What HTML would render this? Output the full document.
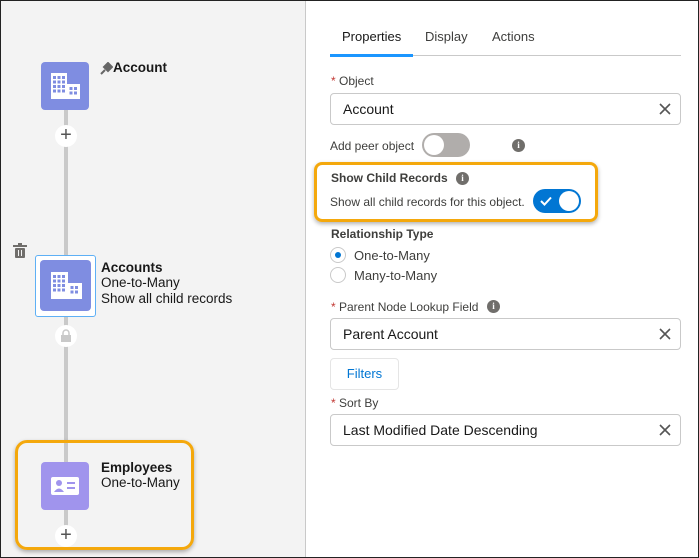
<!DOCTYPE html>
<html><head><style>
*{box-sizing:border-box;margin:0;padding:0}
body{width:699px;height:558px;position:relative;font-family:"Liberation Sans",sans-serif;background:#fff;overflow:hidden}
.frame{position:absolute;left:0;top:0;width:699px;height:558px;border:1px solid #222;pointer-events:none;z-index:10}
.left{position:absolute;left:0;top:0;width:306px;height:558px;background:#f3f3f3;border-right:1px solid #c9c9c9}
.abs{position:absolute}
.line{position:absolute;left:64px;width:4px;background:#c9c9c9}
.circ{position:absolute;width:22px;height:22px;border-radius:50%;background:#fff;color:#555;font-size:20px;line-height:21px;text-align:center}
.t{position:absolute;font-size:13.5px;color:#181818;line-height:16px;white-space:nowrap}
.b{font-weight:bold}
.lbl{position:absolute;font-size:12px;color:#3e3e3c;white-space:nowrap}
.req{color:#c23934}
.inp{position:absolute;left:330px;width:351px;height:32px;border:1px solid #c9c9c9;border-radius:4px;font-size:14px;color:#181818;padding-left:12px;line-height:30px}
.x{position:absolute;right:9px;top:9px}
.info{position:absolute;width:13px;height:13px;border-radius:50%;background:#706e6b;color:#fff;font-size:9px;font-weight:bold;text-align:center;line-height:13px;font-family:"Liberation Serif",serif}
</style></head><body>
<div class="left"></div>
<div class="line" style="top:110px;height:150px"></div>
<div class="line" style="top:316px;height:150px"></div>
<div class="line" style="top:510px;height:20px"></div>

<svg class="abs" style="left:41px;top:62px" width="48" height="48"><rect width="48" height="48" rx="4" fill="#7f8de1"/><g fill="#fff"><rect x="10" y="11" width="16" height="26"/><rect x="26" y="22" width="13" height="15"/></g><g fill="#7f8de1"><rect x="12" y="14" width="3" height="3"/><rect x="16.5" y="14" width="3" height="3"/><rect x="21" y="14" width="3" height="3"/><rect x="12" y="18.5" width="3" height="3"/><rect x="16.5" y="18.5" width="3" height="3"/><rect x="21" y="18.5" width="3" height="3"/><rect x="12" y="23" width="3" height="3"/><rect x="16.5" y="23" width="3" height="3"/><rect x="21" y="23" width="3" height="3"/><rect x="12" y="27.5" width="3" height="3"/><rect x="16.5" y="27.5" width="3" height="3"/><rect x="21" y="27.5" width="3" height="3"/><rect x="28.5" y="25" width="3" height="3"/><rect x="33" y="25" width="3" height="3"/><rect x="28.5" y="29.5" width="3" height="3"/><rect x="33" y="29.5" width="3" height="3"/></g></svg>
<div class="circ" style="left:55px;top:125px">+</div>
<svg class="abs" style="left:100px;top:62px" width="13" height="13"><path d="M1 12 L5 8 M4 5 L8 9 L12 5 L8 1 Z" stroke="#666" stroke-width="2" fill="#666"/></svg>
<div class="t b" style="left:113px;top:60px">Account</div>

<svg class="abs" style="left:13px;top:243px" width="14" height="15"><rect x="0" y="2" width="14" height="2" fill="#706e6b"/><rect x="5" y="0" width="4" height="2" fill="#706e6b"/><rect x="2" y="5" width="10" height="10" rx="1" fill="#706e6b"/><rect x="5" y="7" width="1" height="6" fill="#f3f3f3"/><rect x="8" y="7" width="1" height="6" fill="#f3f3f3"/></svg>
<div class="abs" style="left:35px;top:255px;width:61px;height:62px;border:1px solid #5eb0f5;border-radius:3px;background:#fff"></div>
<svg class="abs" style="left:40px;top:260px" width="51" height="51"><rect width="51" height="51" rx="4" fill="#7f8de1"/><g fill="#fff"><rect x="11" y="12" width="17" height="27"/><rect x="28" y="23" width="14" height="16"/></g><g fill="#7f8de1"><rect x="13" y="15" width="3" height="3"/><rect x="17.5" y="15" width="3" height="3"/><rect x="22" y="15" width="3" height="3"/><rect x="13" y="19.5" width="3" height="3"/><rect x="17.5" y="19.5" width="3" height="3"/><rect x="22" y="19.5" width="3" height="3"/><rect x="13" y="24" width="3" height="3"/><rect x="17.5" y="24" width="3" height="3"/><rect x="22" y="24" width="3" height="3"/><rect x="13" y="28.5" width="3" height="3"/><rect x="17.5" y="28.5" width="3" height="3"/><rect x="22" y="28.5" width="3" height="3"/><rect x="30.5" y="26" width="3" height="3"/><rect x="35" y="26" width="3" height="3"/><rect x="30.5" y="30.5" width="3" height="3"/><rect x="35" y="30.5" width="3" height="3"/></g></svg>
<div class="t b" style="left:101px;top:260px">Accounts</div>
<div class="t" style="left:101px;top:275px">One-to-Many</div>
<div class="t" style="left:101px;top:291px">Show all child records</div>
<div class="circ" style="left:55px;top:325px"></div>
<svg class="abs" style="left:60px;top:329px" width="12" height="14"><path d="M3 6 V4 a3 3 0 0 1 6 0 V6" stroke="#c9c9c9" stroke-width="1.5" fill="none"/><rect x="1" y="6" width="10" height="7" fill="#c9c9c9"/></svg>

<div class="abs" style="left:15px;top:440px;width:179px;height:110px;border:3px solid #f4a80c;border-radius:12px;box-shadow:0 2px 4px rgba(0,0,0,.3)"></div>
<svg class="abs" style="left:41px;top:462px" width="48" height="48"><rect width="48" height="48" rx="4" fill="#a094ed"/><rect x="10" y="15" width="28" height="18" rx="2" fill="#fff"/><circle cx="18" cy="21" r="3" fill="#a094ed"/><path d="M13 30 q5 -7 10 0 z" fill="#a094ed"/><rect x="26" y="20" width="8" height="2" fill="#a094ed"/><rect x="26" y="25" width="8" height="2" fill="#a094ed"/></svg>
<div class="t b" style="left:101px;top:460px">Employees</div>
<div class="t" style="left:101px;top:475px">One-to-Many</div>
<div class="circ" style="left:55px;top:525px">+</div>

<div class="abs" style="left:330px;top:55px;width:351px;height:1px;background:#c9c9c9"></div>
<div class="abs" style="left:330px;top:54px;width:83px;height:3px;background:#1b96ff"></div>
<div class="t" style="left:342px;top:29px;font-size:13px;color:#181818">Properties</div>
<div class="t" style="left:425px;top:29px;font-size:13px;color:#3e3e3c">Display</div>
<div class="t" style="left:492px;top:29px;font-size:13px;color:#3e3e3c">Actions</div>

<div class="lbl" style="left:331px;top:74px"><span class="req">*</span> Object</div>
<div class="inp" style="top:93px">Account<svg class="x" width="12" height="12"><path d="M1 1L11 11M11 1L1 11" stroke="#555" stroke-width="1.6"/></svg></div>
<div class="lbl" style="left:330px;top:139px">Add peer object</div>
<div class="abs" style="left:422px;top:133px;width:48px;height:24px;border-radius:12px;background:#b0adab"></div>
<div class="abs" style="left:424px;top:135px;width:20px;height:20px;border-radius:50%;background:#fff"></div>
<div class="info" style="left:512px;top:139px">i</div>

<div class="abs" style="left:314px;top:162px;width:284px;height:60px;border:3px solid #f4a80c;border-radius:8px;box-shadow:0 2px 4px rgba(0,0,0,.3)"></div>
<div class="lbl b" style="left:331px;top:171px">Show Child Records</div>
<div class="info" style="left:456px;top:172px">i</div>
<div class="lbl" style="left:330px;top:195px">Show all child records for this object.</div>
<div class="abs" style="left:533px;top:189px;width:48px;height:24px;border-radius:12px;background:#0176d3"></div>
<div class="abs" style="left:559px;top:191px;width:20px;height:20px;border-radius:50%;background:#fff"></div>
<svg class="abs" style="left:540px;top:196px" width="12" height="10"><path d="M1 5 L4.5 8.5 L11 1.5" stroke="#fff" stroke-width="2" fill="none"/></svg>

<div class="lbl b" style="left:331px;top:227px">Relationship Type</div>
<div class="abs" style="left:330px;top:247px;width:16px;height:16px;border-radius:50%;border:1px solid #c9c9c9"></div>
<div class="abs" style="left:335px;top:252px;width:6px;height:6px;border-radius:50%;background:#0176d3"></div>
<div class="t" style="left:354px;top:248px;font-size:13px;color:#3e3e3c">One-to-Many</div>
<div class="abs" style="left:330px;top:267px;width:16px;height:16px;border-radius:50%;border:1px solid #c9c9c9"></div>
<div class="t" style="left:354px;top:268px;font-size:13px;color:#3e3e3c">Many-to-Many</div>

<div class="lbl" style="left:331px;top:300px"><span class="req">*</span> Parent Node Lookup Field</div>
<div class="info" style="left:487px;top:300px">i</div>
<div class="inp" style="top:318px">Parent Account<svg class="x" width="12" height="12"><path d="M1 1L11 11M11 1L1 11" stroke="#555" stroke-width="1.6"/></svg></div>
<div class="abs" style="left:330px;top:358px;width:69px;height:32px;border:1px solid #e5e5e5;border-radius:4px;color:#0176d3;font-size:13px;line-height:30px;text-align:center">Filters</div>
<div class="lbl" style="left:331px;top:396px"><span class="req">*</span> Sort By</div>
<div class="inp" style="top:414px">Last Modified Date Descending<svg class="x" width="12" height="12"><path d="M1 1L11 11M11 1L1 11" stroke="#555" stroke-width="1.6"/></svg></div>
<div class="frame"></div>
</body></html>
